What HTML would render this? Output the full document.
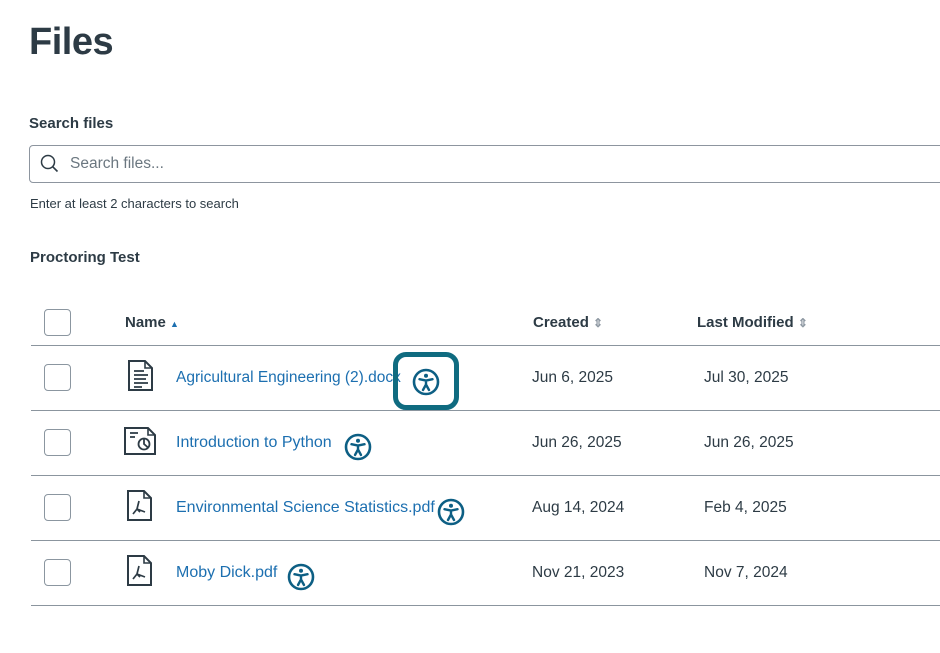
<!DOCTYPE html>
<html><head><meta charset="utf-8"><style>
body{margin:0;width:940px;height:653px;background:#fff;font-family:"Liberation Sans",sans-serif;color:#2d3b45;position:relative;overflow:hidden}
.a{position:absolute;white-space:nowrap}
.h1{left:29px;top:21px;font-size:38px;font-weight:bold;letter-spacing:-0.5px}
.b{font-weight:bold;font-size:15px}
.input{left:29px;top:145px;width:920px;height:36px;border:1px solid #8d959f;border-radius:4px}
.cb{position:absolute;left:44px;width:27px;height:27px;border:1px solid #8b96a0;border-radius:4px;box-sizing:border-box}
.line{position:absolute;left:31px;width:909px;height:1px;background:#8b959e}
.lnk{color:#1c6fb0;font-size:16px}
.dt{font-size:15.5px;color:#2d3b45}
.sort{color:#8f99a3;font-size:12px}
</style></head><body>
<div class="a h1">Files</div>
<div class="a b" style="left:29px;top:115px">Search files</div>
<div class="a input"></div>
<svg class="a" style="left:40px;top:154px" width="20" height="20" viewBox="0 0 20 20"><circle cx="8" cy="8" r="6.5" fill="none" stroke="#2d3b45" stroke-width="1.5"/><path d="M12.8 12.8L17.5 17.5" stroke="#2d3b45" stroke-width="1.6"/></svg>
<div class="a" style="left:70px;top:155px;font-size:15.5px;color:#6b7780">Search files...</div>
<div class="a" style="left:30px;top:196px;font-size:13px">Enter at least 2 characters to search</div>
<div class="a b" style="left:30px;top:249px">Proctoring Test</div>

<div class="cb" style="top:309px"></div>
<div class="a b" style="left:125px;top:314px">Name <span style="color:#1c6fb0;font-size:9px">&#9650;</span></div>
<div class="a b" style="left:533px;top:314px">Created <span class="sort">&#8661;</span></div>
<div class="a b" style="left:697px;top:314px">Last Modified <span class="sort">&#8661;</span></div>
<div class="line" style="top:345px"></div>
<div class="line" style="top:410px"></div>
<div class="line" style="top:475px"></div>
<div class="line" style="top:540px"></div>
<div class="line" style="top:605px"></div>

<div class="cb" style="top:364px"></div>
<div class="cb" style="top:429px"></div>
<div class="cb" style="top:494px"></div>
<div class="cb" style="top:559px"></div>

<svg class="a" style="left:127px;top:359px" width="28" height="33" viewBox="0 0 28 33"><path d="M2 2H18L25 9V31H2Z" fill="none" stroke="#2d3b45" stroke-width="2"/><path d="M18 2V9H25" fill="none" stroke="#2d3b45" stroke-width="1.6"/><path d="M7 12h10M7 16h14M7 20h12M7 24h14M7 28h8" stroke="#2d3b45" stroke-width="1.7"/></svg>
<svg class="a" style="left:123px;top:426px" width="34" height="30" viewBox="0 0 34 30"><path d="M2 2H25L32 9V28H2Z" fill="none" stroke="#2d3b45" stroke-width="2"/><path d="M25 2V9H32" fill="none" stroke="#2d3b45" stroke-width="1.6"/><path d="M7 7h8M7 11h5" stroke="#2d3b45" stroke-width="1.7"/><circle cx="21" cy="18" r="5.5" fill="none" stroke="#2d3b45" stroke-width="1.8"/><path d="M21 12.5V18L25 21.5" fill="none" stroke="#2d3b45" stroke-width="1.8"/></svg>
<svg class="a" style="left:126px;top:489px" width="28" height="33" viewBox="0 0 28 33"><path d="M2 2H18L25 9V31H2Z" fill="none" stroke="#2d3b45" stroke-width="2"/><path d="M18 2V9H25" fill="none" stroke="#2d3b45" stroke-width="1.6"/><path d="M13 12L11 20L7 25M11 20L19 23M11 20L14 23" fill="none" stroke="#2d3b45" stroke-width="1.7"/></svg>
<svg class="a" style="left:126px;top:554px" width="28" height="33" viewBox="0 0 28 33"><path d="M2 2H18L25 9V31H2Z" fill="none" stroke="#2d3b45" stroke-width="2"/><path d="M18 2V9H25" fill="none" stroke="#2d3b45" stroke-width="1.6"/><path d="M13 12L11 20L7 25M11 20L19 23M11 20L14 23" fill="none" stroke="#2d3b45" stroke-width="1.7"/></svg>

<div class="a lnk" style="left:176px;top:369px;font-size:15.5px">Agricultural Engineering (2).docx</div>
<div class="a lnk" style="left:176px;top:434px">Introduction to Python</div>
<div class="a lnk" style="left:176px;top:499px">Environmental Science Statistics.pdf</div>
<div class="a lnk" style="left:176px;top:564px">Moby Dick.pdf</div>

<div class="a" style="left:393px;top:352px;width:56px;height:48px;border:5px solid #0f6b80;border-radius:13px"></div>

<svg width="0" height="0" style="position:absolute"><defs><g id="ac"><circle cx="14" cy="14" r="12" fill="none" stroke="#0d5f84" stroke-width="2.6"/><circle cx="14" cy="7.8" r="2" fill="#0d5f84"/><path d="M7.5 11.2L14 12.6L20.5 11.2M14 12.6V16.5M14 16.5L11 22M14 16.5L17 22" fill="none" stroke="#0d5f84" stroke-width="2.4" stroke-linecap="round" stroke-linejoin="round"/></g></defs></svg>
<svg class="a" style="left:412px;top:368px" width="28" height="28"><use href="#ac"/></svg>
<svg class="a" style="left:344px;top:433px" width="28" height="28"><use href="#ac"/></svg>
<svg class="a" style="left:437px;top:498px" width="28" height="28"><use href="#ac"/></svg>
<svg class="a" style="left:287px;top:563px" width="28" height="28"><use href="#ac"/></svg>

<div class="a dt" style="left:532px;top:369px">Jun 6, 2025</div>
<div class="a dt" style="left:704px;top:369px">Jul 30, 2025</div>
<div class="a dt" style="left:532px;top:434px">Jun 26, 2025</div>
<div class="a dt" style="left:704px;top:434px">Jun 26, 2025</div>
<div class="a dt" style="left:532px;top:499px">Aug 14, 2024</div>
<div class="a dt" style="left:704px;top:499px">Feb 4, 2025</div>
<div class="a dt" style="left:532px;top:564px">Nov 21, 2023</div>
<div class="a dt" style="left:704px;top:564px">Nov 7, 2024</div>
</body></html>
